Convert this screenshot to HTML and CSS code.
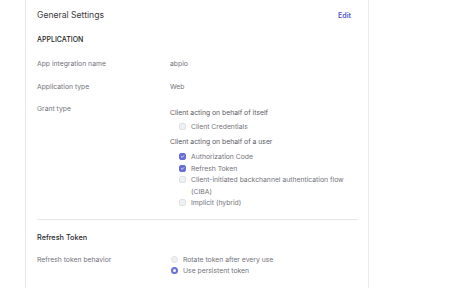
FILE: index.html
```html
<!DOCTYPE html>
<html>
<head>
<meta charset="utf-8">
<link rel="stylesheet" href="styles.css">
</head>
<body>
<div class="card">
  <div class="header">
    <span class="title">General Settings</span>
    <span class="edit">Edit</span>
  </div>
  <div class="section-title">APPLICATION</div>
  <div class="row r1">
    <div class="label">App integration name</div>
    <div class="value">abpio</div>
  </div>
  <div class="row r2">
    <div class="label">Application type</div>
    <div class="value">Web</div>
  </div>
  <div class="row r3">
    <div class="label">Grant type</div>
    <div class="value grants">
      <div class="group-title">Client acting on behalf of itself</div>
      <div class="opts first">
        <div class="opt"><span class="cb"></span><span>Client Credentials</span></div>
      </div>
      <div class="group-title g2">Client acting on behalf of a user</div>
      <div class="opts second">
        <div class="opt"><span class="cb on"><svg viewBox="0 0 8 8" width="8" height="8"><path d="M2 4.1 L3.4 5.4 L6 2.7" fill="none" stroke="#fff" stroke-width="1.2" stroke-linecap="round" stroke-linejoin="round"/></svg></span><span>Authorization Code</span></div>
        <div class="opt"><span class="cb on"><svg viewBox="0 0 8 8" width="8" height="8"><path d="M2 4.1 L3.4 5.4 L6 2.7" fill="none" stroke="#fff" stroke-width="1.2" stroke-linecap="round" stroke-linejoin="round"/></svg></span><span>Refresh Token</span></div>
        <div class="opt"><span class="cb"></span><span>Client-initiated backchannel authentication flow<br>(CIBA)</span></div>
        <div class="opt"><span class="cb"></span><span>Implicit (hybrid)</span></div>
      </div>
    </div>
  </div>
  <div class="divider"></div>
  <div class="section-title2">Refresh Token</div>
  <div class="row r4">
    <div class="label">Refresh token behavior</div>
    <div class="value radios">
      <div class="opt"><span class="rb"></span><span>Rotate token after every use</span></div>
      <div class="opt"><span class="rb on"></span><span>Use persistent token</span></div>
    </div>
  </div>
</div>
</body>
</html>
```
FILE: styles.css
```css
html, body {
  margin: 0;
  padding: 0;
  background: #ffffff;
}
body {
  font-family: Inter, "Noto Sans", "Liberation Sans", sans-serif;
  color: #73737b;
  width: 474px;
  height: 288px;
  overflow: hidden;
}
.card {
  margin-left: 25px;
  width: 331px;
  height: 288px;
  border-left: 1px solid #e9e9ec;
  border-right: 1px solid #e9e9ec;
  padding-left: 11px;
  box-sizing: content-box;
}
.header {
  height: 30px;
  display: flex;
  align-items: center;
  justify-content: space-between;
  padding-right: 17px;
}
.title {
  font-size: 8.6px;
  color: #3a3a40;
  font-weight: 400;
}
.edit {
  font-size: 7px;
  color: #5157d6;
  font-weight: 600;
}
.section-title {
  margin-top: 5px;
  height: 10px;
  line-height: 10px;
  font-size: 7px;
  font-weight: 500;
  color: #1d1d21;
}
.row {
  display: flex;
  font-size: 6.8px;
  line-height: 11px;
}
.label {
  width: 133px;
  flex: none;
}
.r1 { margin-top: 12.5px; }
.r2 { margin-top: 12px; }
.r3 { margin-top: 11px; }
.grants { padding-top: 4px; }
.group-title {
  line-height: 11px;
  color: #5a5a62;
}
.g2 { margin-top: 4px; }
.opts {
  padding-left: 9px;
}
.opts.first { margin-top: 3px; }
.opts.second { margin-top: 4px; }
.opt {
  display: flex;
  align-items: flex-start;
  line-height: 11.5px;
}
.cb {
  width: 7px;
  height: 7px;
  border-radius: 2px;
  background: #f0f0f2;
  border: 1px solid #e1e1e5;
  box-sizing: border-box;
  margin-top: 2.2px;
  margin-right: 5px;
  flex: none;
  display: flex;
  align-items: center;
  justify-content: center;
}
.cb.on {
  background: #6a6fd8;
  border-color: #6a6fd8;
}
.cb svg { width: 7px; height: 7px; }
.divider {
  margin-top: 10px;
  width: 321px;
  height: 1px;
  background: #e6e6e9;
}
.section-title2 {
  margin-top: 12px;
  height: 11px;
  line-height: 11px;
  font-size: 7.3px;
  font-weight: 500;
  color: #2a2a30;
}
.r4 { margin-top: 11px; }
.radios .opt { line-height: 11px; }
.rb {
  width: 7px;
  height: 7px;
  border-radius: 50%;
  background: #f0f0f2;
  border: 1px solid #e1e1e5;
  box-sizing: border-box;
  margin-top: 2px;
  margin-left: 1px;
  margin-right: 5px;
  flex: none;
}
.rb.on {
  background: #ffffff;
  border: 2px solid #6a6fd8;
}
```
